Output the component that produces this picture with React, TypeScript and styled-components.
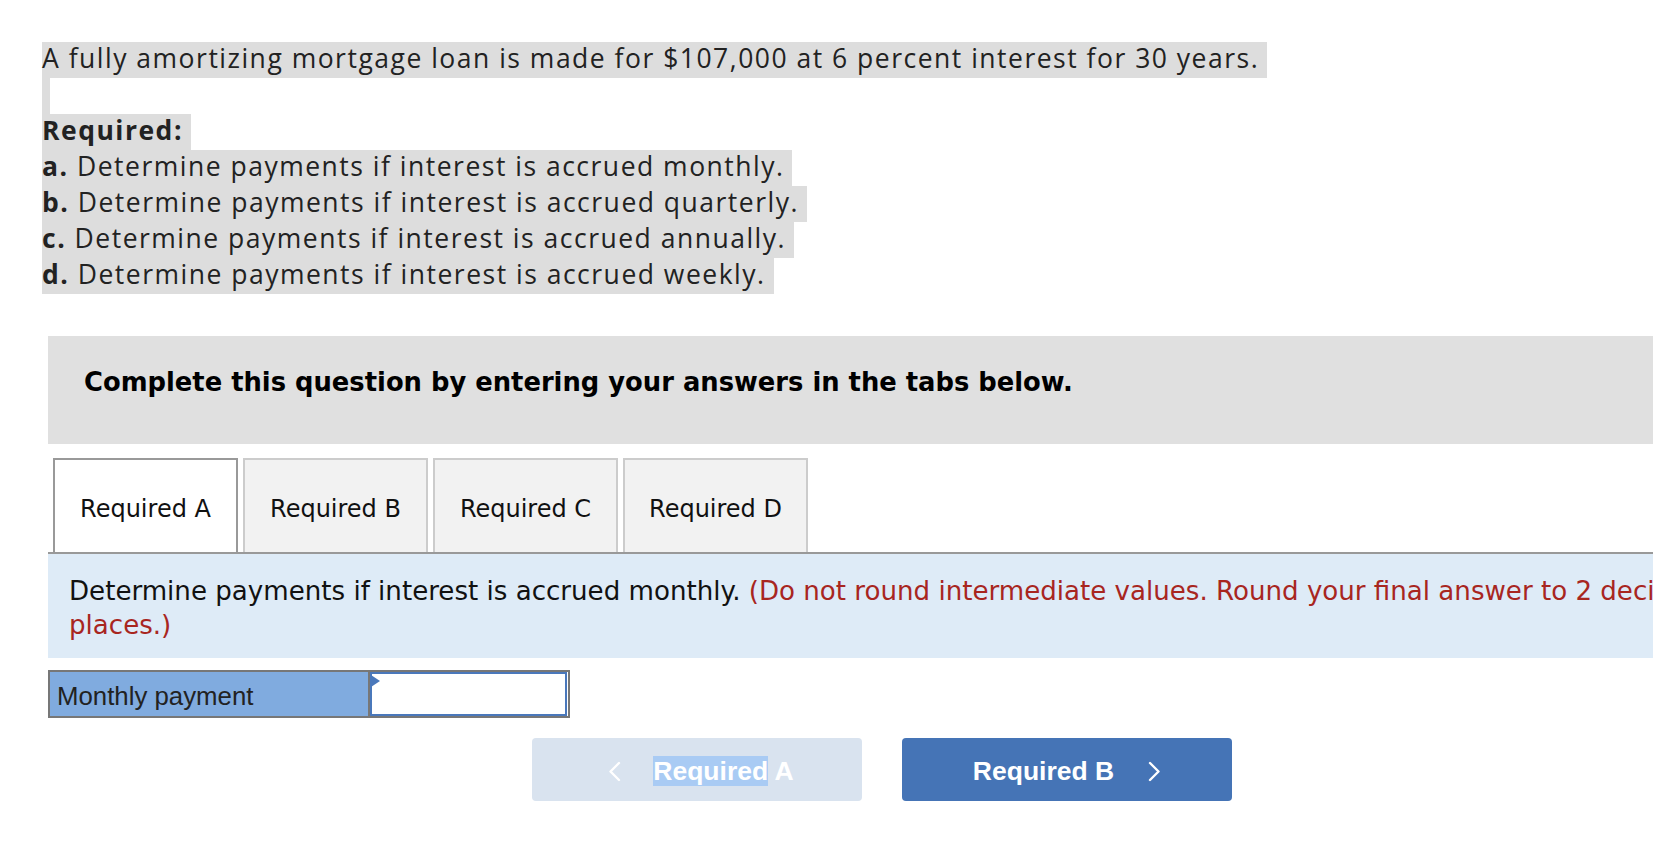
import React from "react";
import styled, { createGlobalStyle } from "styled-components";

const GlobalStyle = createGlobalStyle`
  html, body {
    margin: 0;
    padding: 0;
    background: #ffffff;
    overflow-x: hidden;
  }
  * { box-sizing: border-box; }
`;

const Page = styled.div`
  width: 1716px;
  padding-top: 42px;
`;

const Question = styled.div`
  padding-left: 42px;
  font-family: "Open Sans", Lato, sans-serif;
  font-size: 26.5px;
  letter-spacing: 1.5px;
  color: #222222;
`;

const HLine = styled.div`
  width: fit-content;
  height: 36px;
  line-height: 32px;
  background: #dddddd;
  padding-right: 8px;
  white-space: nowrap;
`;

const BlankMark = styled.div`
  width: 8px;
  height: 36px;
  background: #dddddd;
`;

const Strong = styled.b`
  font-weight: 700;
`;

const Answer = styled.div`
  margin-top: 42px;
  margin-left: 48px;
  width: 1668px;
`;

const Instructions = styled.div`
  height: 108px;
  background: #e0e0e0;
  padding: 31px 0 0 36px;
  font-family: "DejaVu Sans", Verdana, sans-serif;
  font-weight: 700;
  font-size: 25.8px;
  line-height: normal;
  color: #000000;
`;

const TabList = styled.div`
  margin-top: 14px;
  display: flex;
  gap: 5px;
  padding-left: 5px;
  border-bottom: 2px solid #999999;
`;

const Tab = styled.div<{ $active?: boolean }>`
  width: 185px;
  height: 94px;
  display: flex;
  align-items: center;
  justify-content: center;
  font-family: "DejaVu Sans", Verdana, sans-serif;
  font-size: 24px;
  color: #111111;
  background: ${(p) => (p.$active ? "#ffffff" : "#f2f2f2")};
  border: 2px solid ${(p) => (p.$active ? "#999999" : "#cccccc")};
  border-bottom: none;
  padding-top: 6px;
`;

const Panel = styled.div`
  background: #deebf7;
  padding: 21px 0 16px 21px;
  font-family: "DejaVu Sans", Verdana, sans-serif;
  font-size: 26.1px;
  line-height: 33.5px;
  color: #111111;
`;

const Red = styled.span`
  color: #a8261f;
`;

const AnswerRow = styled.div`
  margin-top: 12px;
  width: 522px;
  height: 48px;
  display: flex;
  border: 2px solid #777777;
`;

const Label = styled.div`
  width: 320px;
  background: #80abdf;
  border-right: 2px solid #777777;
  display: flex;
  align-items: center;
  padding: 5px 0 0 7px;
  font-family: "Liberation Sans", Arial, sans-serif;
  font-size: 25.8px;
  color: #222222;
`;

const InputCell = styled.div`
  position: relative;
  flex: 1;
  background: #ffffff;
  padding: 0 1px 0 0;
  display: flex;
`;

const Input = styled.input`
  flex: 1;
  width: 100%;
  border: 2px solid #4a78bb;
  background: #ffffff;
  outline: none;
  margin: 0;
`;

const Flag = styled.span`
  position: absolute;
  left: 1px;
  top: 3px;
  width: 0;
  height: 0;
  border-top: 6px solid transparent;
  border-bottom: 6px solid transparent;
  border-left: 9px solid #4a78bb;
`;

const NavRow = styled.div`
  margin-top: 20px;
  display: flex;
  justify-content: center;
  gap: 40px;
`;

const NavButton = styled.button<{ $disabled?: boolean }>`
  width: 330px;
  height: 63px;
  border: none;
  border-radius: 4px;
  background: ${(p) => (p.$disabled ? "#d9e3ef" : "#4574b6")};
  color: #ffffff;
  font-family: "Liberation Sans", Arial, sans-serif;
  font-weight: 700;
  font-size: 26.5px;
  display: flex;
  align-items: center;
  justify-content: center;
  gap: ${(p) => (p.$disabled ? "32px" : "34px")};
  padding: 3px 0 0 ${(p) => (p.$disabled ? "8px" : "0")};
  cursor: pointer;
`;

const Selected = styled.span`
  background: #a9cbf4;
`;

const Chevron = ({ dir }: { dir: "left" | "right" }) => (
  <svg width="13" height="21" viewBox="0 0 13 21" fill="none">
    <polyline
      points={dir === "left" ? "11,2 2.5,10.5 11,19" : "2,2 10.5,10.5 2,19"}
      stroke="#ffffff"
      strokeWidth="2.4"
      strokeLinecap="round"
      strokeLinejoin="round"
    />
  </svg>
);

export default function App() {
  return (
    <>
      <GlobalStyle />
      <Page>
        <Question>
          <HLine>
            A fully amortizing mortgage loan is made for $107,000 at 6 percent interest for 30 years.
          </HLine>
          <BlankMark />
          <HLine>
            <Strong>Required:</Strong>
          </HLine>
          <HLine>
            <Strong>a.</Strong> Determine payments if interest is accrued monthly.
          </HLine>
          <HLine>
            <Strong>b.</Strong> Determine payments if interest is accrued quarterly.
          </HLine>
          <HLine>
            <Strong>c.</Strong> Determine payments if interest is accrued annually.
          </HLine>
          <HLine>
            <Strong>d.</Strong> Determine payments if interest is accrued weekly.
          </HLine>
        </Question>

        <Answer>
          <Instructions>Complete this question by entering your answers in the tabs below.</Instructions>
          <TabList>
            <Tab $active>Required A</Tab>
            <Tab>Required B</Tab>
            <Tab>Required C</Tab>
            <Tab>Required D</Tab>
          </TabList>
          <Panel>
            Determine payments if interest is accrued monthly.{" "}
            <Red>(Do not round intermediate values. Round your final answer to 2 decimal places.)</Red>
          </Panel>
          <AnswerRow>
            <Label>Monthly payment</Label>
            <InputCell>
              <Input type="text" aria-label="Monthly payment" />
              <Flag />
            </InputCell>
          </AnswerRow>
          <NavRow>
            <NavButton $disabled>
              <Chevron dir="left" />
              <span>
                <Selected>Required</Selected> A
              </span>
            </NavButton>
            <NavButton>
              <span>Required B</span>
              <Chevron dir="right" />
            </NavButton>
          </NavRow>
        </Answer>
      </Page>
    </>
  );
}
